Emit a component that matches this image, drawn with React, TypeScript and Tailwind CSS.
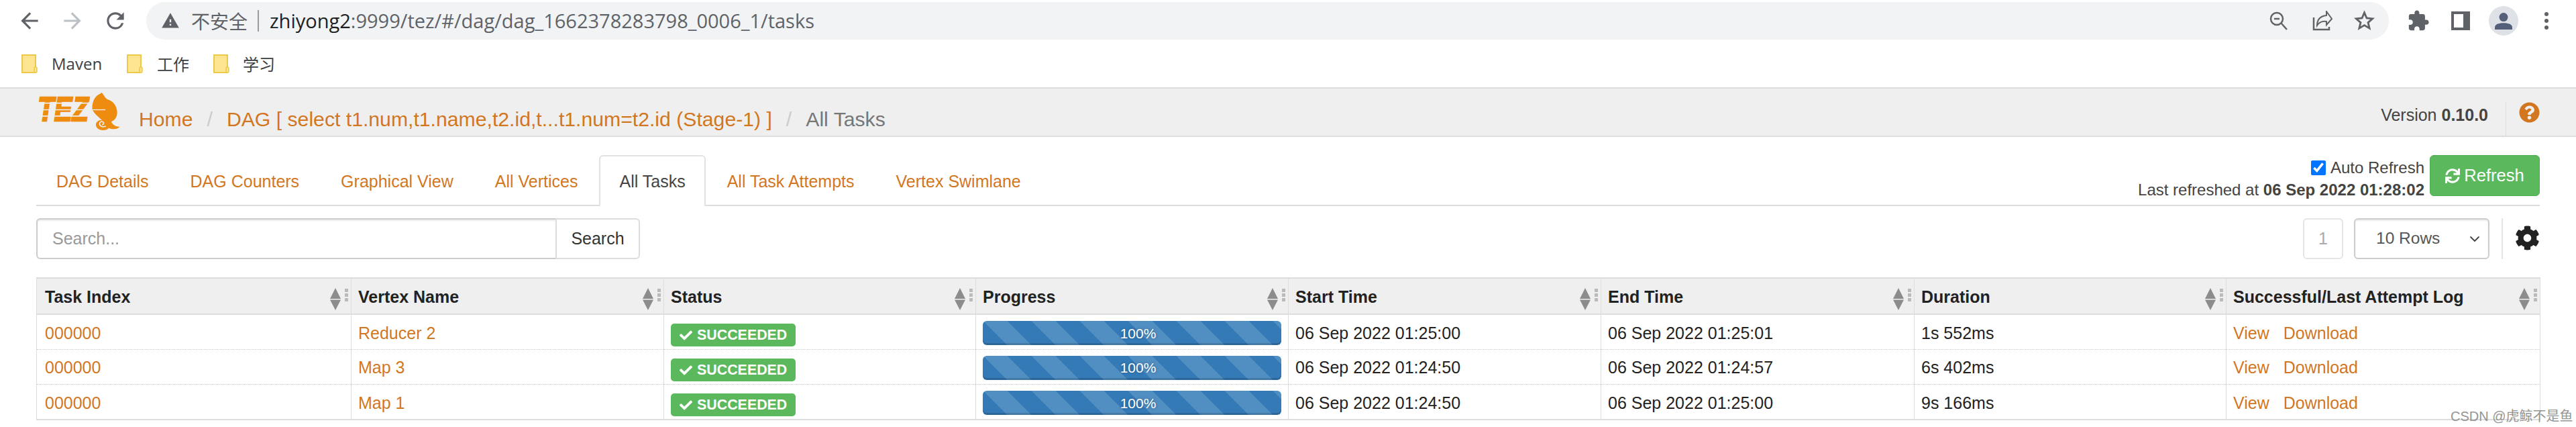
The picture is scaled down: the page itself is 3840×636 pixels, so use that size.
import React from "react";
import { ChevronDown } from "lucide-react";
import { FaCheck, FaCog, FaQuestionCircle, FaSync } from "react-icons/fa";

const tabs = ["DAG Details", "DAG Counters", "Graphical View", "All Vertices", "All Tasks", "All Task Attempts", "Vertex Swimlane"];

const columns = [
  { name: "Task Index", width: 469 },
  { name: "Vertex Name", width: 466 },
  { name: "Status", width: 465 },
  { name: "Progress", width: 466 },
  { name: "Start Time", width: 466 },
  { name: "End Time", width: 467 },
  { name: "Duration", width: 465 },
  { name: "Successful/Last Attempt Log", width: 468 },
];

const rows = [
  { vertex: "Reducer 2", start: "06 Sep 2022 01:25:00", end: "06 Sep 2022 01:25:01", duration: "1s 552ms" },
  { vertex: "Map 3", start: "06 Sep 2022 01:24:50", end: "06 Sep 2022 01:24:57", duration: "6s 402ms" },
  { vertex: "Map 1", start: "06 Sep 2022 01:24:50", end: "06 Sep 2022 01:25:00", duration: "9s 166ms" },
];

function MaterialIcon({ d, className }: { d: string; className: string }) {
  return (
    <svg viewBox="0 0 24 24" className={className} fill="currentColor">
      <path d={d} />
    </svg>
  );
}

function Folder() {
  return (
    <svg viewBox="0 0 24 28" className="w-[24px] h-[28px] shrink-0">
      <path d="M1 1h20v26H1z" fill="#fee591" stroke="#ecc94b" strokeWidth="2" />
      <rect x="19" y="19" width="4" height="8" rx="1.5" fill="#fee591" stroke="#ecc94b" strokeWidth="1.5" />
    </svg>
  );
}

function TezLogo() {
  return (
    <svg viewBox="75 25 372 172" className="w-[124px] h-[57px] shrink-0">
      <text
        x="78"
        y="153"
        fontFamily="Liberation Sans"
        fontWeight="700"
        fontStyle="italic"
        fontSize="148"
        fill="#ee8c0f"
        stroke="#ee8c0f"
        strokeWidth="7"
        textLength="228"
        lengthAdjust="spacingAndGlyphs"
      >
        TEZ
      </text>
      <path d="M75 72h240M75 102h240M75 130h240" stroke="#efefef" strokeWidth="5" />
      <path
        d="M365 25c12 10 14 26 30 32 22 6 38 28 40 54 1 22-10 38-26 44 2 12 18 24 38 23-10 12-32 14-50 6-10 12-36 14-50 2-12-12-10-28 6-36 6-2 12-2 16 2-10-12-30-24-46-50-2-30 8-52 22-64 8-6 16-8 20-13z"
        fill="#ee8c0f"
      />
      <path d="M322 102h60" stroke="#efefef" strokeWidth="4" />
      <path d="M384 176c-16 6-30-2-28-14 2-8 14-10 18-2 2 5-2 9-7 8" fill="none" stroke="#efefef" strokeWidth="5" />
    </svg>
  );
}

function SortIcon() {
  return (
    <div className="flex items-start gap-[6px] shrink-0 mt-[4px]">
      <svg viewBox="0 0 16 33" className="w-[16px] h-[33px]">
        <path d="M8 0l8 16H0zM0 17.5h16L8 33z" fill="#8c8c8c" />
      </svg>
      <div className="flex flex-col gap-[2px] pt-px">
        <span className="w-[5px] h-[5px] bg-[#bbb]" />
        <span className="w-[5px] h-[5px] bg-[#bbb]" />
        <span className="w-[5px] h-[5px] bg-[#bbb]" />
      </div>
    </div>
  );
}

function Progress() {
  return (
    <div className="h-[36px] rounded-[6px] bg-[#337ab7] bg-[linear-gradient(45deg,rgba(255,255,255,.15)_25%,transparent_25%,transparent_50%,rgba(255,255,255,.15)_50%,rgba(255,255,255,.15)_75%,transparent_75%,transparent)] bg-[length:72px_72px] shadow-[inset_0_-3px_0_rgba(0,0,0,.15)] flex items-center justify-center pl-[18px] text-[21px] text-white [text-shadow:0_0_4px_rgba(0,0,0,.3)]">
      100%
    </div>
  );
}

export default function App() {
  return (
    <div className="relative w-[3840px] h-[636px] overflow-hidden bg-white font-['Liberation_Sans',Arial,sans-serif] text-[#333]">
      {/* browser toolbar */}
      <div className="h-[60px] flex items-center pt-px">
        <MaterialIcon
          className="w-[38px] h-[38px] ml-[25px] text-[#5f6368] shrink-0"
          d="M20 11H7.83l5.59-5.59L12 4l-8 8 8 8 1.41-1.41L7.83 13H20v-2z"
        />
        <MaterialIcon
          className="w-[38px] h-[38px] ml-[26px] text-[#bdc1c6] shrink-0"
          d="M12 4l-1.41 1.41L16.17 11H4v2h12.17l-5.58 5.59L12 20l8-8z"
        />
        <MaterialIcon
          className="w-[38px] h-[38px] ml-[26px] text-[#5f6368] shrink-0"
          d="M17.65 6.35A7.958 7.958 0 0012 4c-4.42 0-7.99 3.58-7.99 8s3.57 8 7.99 8c3.73 0 6.84-2.55 7.73-6h-2.08A5.99 5.99 0 0112 18c-3.31 0-6-2.69-6-6s2.69-6 6-6c1.66 0 3.14.69 4.22 1.78L13 11h7V4l-2.35 2.35z"
        />
        <div className="ml-[27px] w-[3343px] h-[56px] rounded-full bg-[#f1f3f4] flex items-center shrink-0">
          <MaterialIcon
            className="w-[28px] h-[28px] ml-[22px] text-[#5f6368] shrink-0"
            d="M1 21h22L12 2 1 21zm12-3h-2v-2h2v2zm0-4h-2v-4h2v4z"
          />
          <span className="ml-[17px] text-[28px] text-[#5f6368] font-['Noto_Sans_CJK_SC',sans-serif]">不安全</span>
          <span className="ml-[15px] w-[2px] h-[32px] bg-[#9a9a9a]" />
          <span className="ml-[16px] text-[29px] text-[#5f6368] font-['Open_Sans',sans-serif]">
            <span className="text-[#202124]">zhiyong2</span>:9999/tez/#/dag/dag_1662378283798_0006_1/tasks
          </span>
          <svg viewBox="0 0 28 28" className="ml-auto w-[28px] h-[28px] text-[#5f6368]" fill="none" stroke="currentColor" strokeWidth="2.5">
            <circle cx="11" cy="11" r="9" />
            <path d="M7 11h8M17.5 17.5L26 27" />
          </svg>
          <svg viewBox="0 0 30 30" className="ml-[36px] w-[30px] h-[30px] text-[#5f6368]" fill="none" stroke="currentColor" strokeWidth="2">
            <path d="M2 10v18h23v-4" strokeWidth="2.5" />
            <path d="M21 1l8 11-8 9v-5c-7-1-11 1-14 6 0-9 5-14 14-15z" />
          </svg>
          <svg viewBox="0 0 24 24" className="ml-[32px] mr-[21px] w-[31px] h-[31px] text-[#5f6368]" fill="none" stroke="currentColor" strokeWidth="2.2">
            <path d="M12 3l2.7 6.3 6.8.6-5.2 4.5 1.6 6.6-5.9-3.5-5.9 3.5 1.6-6.6-5.2-4.5 6.8-.6z" />
          </svg>
        </div>
        <MaterialIcon
          className="w-[34px] h-[34px] ml-[27px] text-[#5f6368] shrink-0"
          d="M20.5 11H19V7c0-1.1-.9-2-2-2h-4V3.5C13 2.12 11.88 1 10.5 1S8 2.12 8 3.5V5H4c-1.1 0-1.99.9-1.99 2v3.8H3.5c1.49 0 2.7 1.21 2.7 2.7s-1.21 2.7-2.7 2.7H2V20c0 1.1.9 2 2 2h3.8v-1.5c0-1.49 1.21-2.7 2.7-2.7 1.49 0 2.7 1.21 2.7 2.7V22H17c1.1 0 2-.9 2-2v-4h1.5c1.38 0 2.5-1.12 2.5-2.5S21.88 11 20.5 11z"
        />
        <svg viewBox="0 0 28 28" className="ml-[32px] w-[28px] h-[28px] text-[#5f6368] shrink-0">
          <rect width="28" height="28" fill="currentColor" />
          <rect x="4" y="4" width="14" height="20" fill="#fff" />
        </svg>
        <div className="ml-[28px] w-[44px] h-[44px] rounded-full bg-[#dee1e6] flex items-center justify-center shrink-0">
          <svg viewBox="0 0 24 24" className="w-[26px] h-[26px] text-[#54607a]" fill="currentColor">
            <circle cx="12" cy="7" r="6" />
            <path d="M0 24v-3c0-4 5-6 12-6s12 2 12 6v3z" />
          </svg>
        </div>
        <div className="ml-[39px] flex flex-col gap-[4px] shrink-0">
          <span className="w-[6px] h-[6px] rounded-full bg-[#5f6368]" />
          <span className="w-[6px] h-[6px] rounded-full bg-[#5f6368]" />
          <span className="w-[6px] h-[6px] rounded-full bg-[#5f6368]" />
        </div>
      </div>

      {/* bookmarks */}
      <div className="h-[70px] flex items-center pl-[32px] text-[24px] text-[#3c4043] font-['Open_Sans','Noto_Sans_CJK_SC',sans-serif]">
        <Folder />
        <span className="ml-[21px] mr-[37px]">Maven</span>
        <Folder />
        <span className="ml-[21px] mr-[36px] font-['Noto_Sans_CJK_SC',sans-serif]">工作</span>
        <Folder />
        <span className="ml-[20px] font-['Noto_Sans_CJK_SC',sans-serif]">学习</span>
      </div>

      {/* app header */}
      <div className="h-[74px] bg-[#efefef] border-t-2 border-b-2 border-[#ddd] flex pl-[55px] pr-[54px]">
        <div className="pt-[6px]">
          <TezLogo />
        </div>
        <div className="ml-[28px] pt-[28px] text-[30.2px] leading-[36px] flex">
          <span className="text-[#d2771f]">Home</span>
          <span className="text-[#ccc] mx-[21px]">/</span>
          <span className="text-[#d2771f]">DAG [ select t1.num,t1.name,t2.id,t...t1.num=t2.id (Stage-1) ]</span>
          <span className="text-[#ccc] mx-[21px]">/</span>
          <span className="text-[#777]">All Tasks</span>
        </div>
        <div className="ml-auto flex items-start pt-[20px]">
          <span className="mt-[5px] text-[25px] leading-[28px] text-[#444]">
            Version <b>0.10.0</b>
          </span>
          <span className="ml-[26px] w-px h-[50px] bg-[#ddd]" />
          <FaQuestionCircle className="ml-[19px] w-[31px] h-[31px] text-[#d2771f]" />
        </div>
      </div>

      {/* tabs */}
      <div className="mx-[54px] mt-[27px] h-[76px] border-b-2 border-[#ddd] flex text-[25px]">
        {tabs.map((tab) => (
          <div
            key={tab}
            className={
              tab === "All Tasks"
                ? "h-[76px] mr-[2px] px-[28px] pt-[19px] border-2 border-b-0 border-[#e2e2e2] rounded-t-[6px] bg-white text-[#444]"
                : "h-[76px] mr-[2px] px-[28px] pt-[19px] border-2 border-transparent border-b-0 text-[#d2771f]"
            }
          >
            {tab}
          </div>
        ))}
        <div className="ml-auto flex items-start">
          <div className="flex flex-col items-end text-[24px] leading-[33px] pt-[2px] text-[#444]">
            <label className="flex items-center gap-[7px]">
              <input type="checkbox" defaultChecked className="w-[22px] h-[22px] accent-[#0075ff]" />
              Auto Refresh
            </label>
            <span>
              Last refreshed at <b>06 Sep 2022 01:28:02</b>
            </span>
          </div>
          <div className="ml-[8px] w-[164px] h-[61px] rounded-[6px] bg-[#5cb85c] border border-[#4cae4c] flex items-center justify-center gap-[6px] text-[25.6px] text-white">
            <FaSync className="w-[22px] h-[22px]" />
            Refresh
          </div>
        </div>
      </div>

      {/* search and paging */}
      <div className="mx-[54px] mt-[18px] h-[61px] flex text-[25px]">
        <div className="w-[774px] border-2 border-r-0 border-[#ccc] rounded-l-[6px] shadow-[inset_0_2px_2px_rgba(0,0,0,.075)] pl-[22px] flex items-center text-[#999]">
          Search...
        </div>
        <div className="w-[126px] border-2 border-[#ddd] rounded-r-[6px] flex items-center justify-center">Search</div>
        <div className="ml-auto w-[60px] border-2 border-[#e5e5e5] rounded-[6px] flex items-center justify-center text-[#aaa]">1</div>
        <div className="ml-[16px] w-[202px] border-2 border-[#ccc] rounded-[6px] flex items-center pl-[31px] text-[24.5px] text-[#555] shadow-[inset_0_2px_2px_rgba(0,0,0,.075)]">
          10 Rows
          <ChevronDown className="ml-auto mr-[8px] w-[24px] h-[24px] text-[#444]" strokeWidth={1.8} />
        </div>
        <div className="ml-[18px] w-[57px] border-l-2 border-[#e5e5e5] flex items-start justify-end pt-[11px]">
          <FaCog className="w-[37px] h-[37px] text-[#222]" />
        </div>
      </div>

      {/* tasks table */}
      <table className="ml-[54px] mt-[27px] w-[3732px] table-fixed border-collapse border-x border-t-2 border-b-2 border-[#ddd] text-[25px]">
        <colgroup>
          {columns.map((column) => (
            <col key={column.name} style={{ width: column.width }} />
          ))}
        </colgroup>
        <thead>
          <tr className="h-[54px] bg-[#efefef] border-b-2 border-[#ddd]">
            {columns.map((column, i) => (
              <th
                key={column.name}
                className={
                  i === 0
                    ? "border-r border-[#ddd] pl-[12px] pr-[4px] pt-[4px] font-bold text-left text-[#222]"
                    : "border-r border-[#ddd] pl-[10px] pr-[4px] pt-[4px] font-bold text-left text-[#222]"
                }
              >
                <div className="flex items-center justify-between">
                  <span>{column.name}</span>
                  <SortIcon />
                </div>
              </th>
            ))}
          </tr>
        </thead>
        <tbody>
          {rows.map((row, i) => (
            <tr key={row.vertex} className={i === 2 ? "h-[53px]" : "h-[52px] border-b border-dotted border-[#ccc]"}>
              <td className="border-r border-[#ddd] pl-[12px] pt-[4px] text-[#d2771f]">000000</td>
              <td className="border-r border-[#ddd] pl-[10px] pt-[4px] text-[#d2771f]">{row.vertex}</td>
              <td className="border-r border-[#ddd] px-[10px] pt-[4px]">
                <div className="mt-[6px] w-[186px] h-[34px] rounded-[5px] bg-[#5cb85c] flex items-center gap-[7px] pl-[13px] text-[21.4px] font-bold text-white">
                  <FaCheck className="w-[19px] h-[19px] shrink-0" />
                  SUCCEEDED
                </div>
              </td>
              <td className="border-r border-[#ddd] px-[10px] pt-[4px]">
                <Progress />
              </td>
              <td className="border-r border-[#ddd] pl-[10px] pt-[4px] text-[#222]">{row.start}</td>
              <td className="border-r border-[#ddd] pl-[10px] pt-[4px] text-[#222]">{row.end}</td>
              <td className="border-r border-[#ddd] pl-[10px] pt-[4px] text-[#222]">{row.duration}</td>
              <td className="pl-[10px] pt-[4px] text-[#d2771f]">
                View<span className="ml-[21px]">Download</span>
              </td>
            </tr>
          ))}
        </tbody>
      </table>

      <div className="absolute left-[3653px] top-[605px] text-[20px] text-[#8a8a8a] font-['Liberation_Sans','Noto_Sans_CJK_SC',sans-serif] opacity-90">
        CSDN @虎鲸不是鱼
      </div>
    </div>
  );
}
